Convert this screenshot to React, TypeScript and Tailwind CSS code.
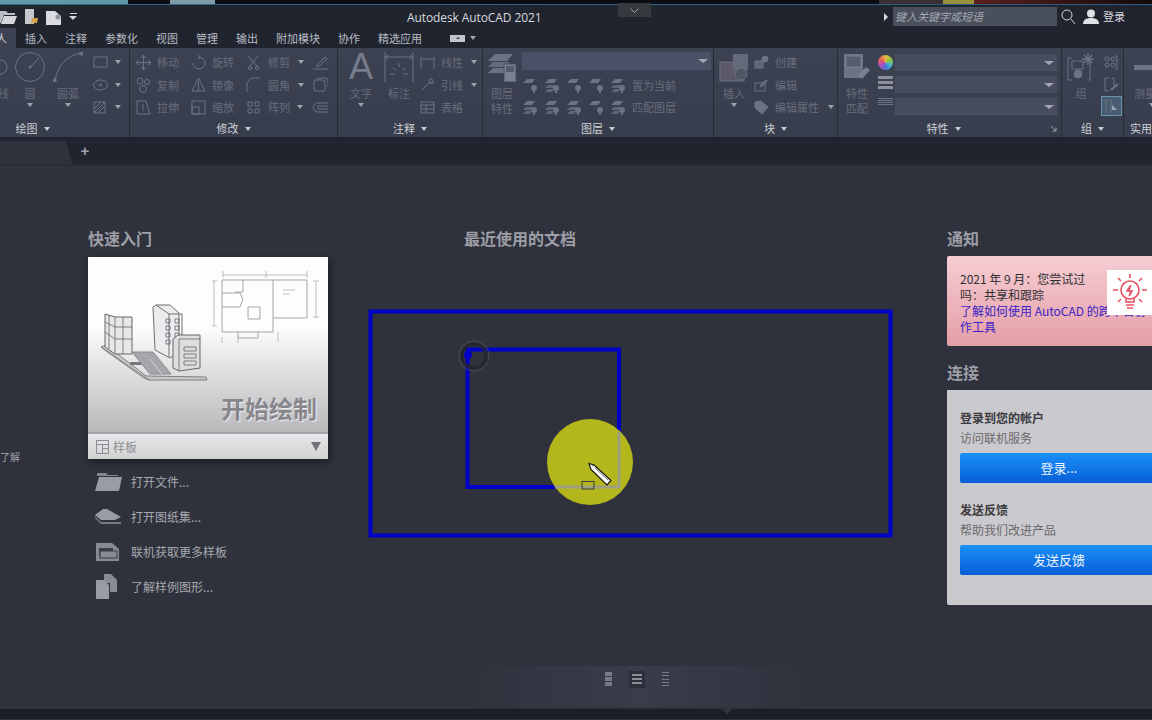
import type { ReactNode } from 'react';

const S = { fill: 'none', stroke: '#6d7383', strokeWidth: 1 };

function Ico({ w = 16, h = 16, children }: { w?: number; h?: number; children: ReactNode }) {
  return (
    <svg width={w} height={h} viewBox={`0 0 ${w} ${h}`} className="shrink-0" {...S}>
      {children}
    </svg>
  );
}

function Down({ light = false }: { light?: boolean }) {
  return <span className={`inline-block w-0 h-0 border-x-[3px] border-x-transparent border-t-[4px] ${light ? 'border-t-[#c9ccd3]' : 'border-t-[#9ea3ae]'}`} />;
}

function Panel({ w, label, labelClass, children, corner }: { w: number; label: string; labelClass?: string; children: ReactNode; corner?: boolean }) {
  return (
    <div className="h-full shrink-0 flex flex-col border-r border-r-[#272b36] overflow-hidden" style={{ width: w }}>
      <div className="h-[72px] pt-[3px] flex items-start">{children}</div>
      <div className={`h-[17px] relative flex items-center justify-center gap-[6px] text-[11px] text-[#cfd1d7] ${labelClass ?? ''}`}>
        <span>{label}</span>
        <Down light />
        {corner && (
          <svg width="7" height="7" viewBox="0 0 7 7" fill="none" stroke="#9ea3ae" className="absolute right-[4px] top-[5px]">
            <path d="M1 1l5 5M6 2.500V6H2.500" />
          </svg>
        )}
      </div>
    </div>
  );
}

function Small({ icon, label, arrow, w, gap = 6 }: { icon: ReactNode; label?: string; arrow?: boolean; w?: number; gap?: number }) {
  return (
    <div className="h-[22.5px] flex items-center text-[11px] text-[#676d7d]" style={{ width: w, gap }}>
      {icon}
      {label && <span className="whitespace-nowrap">{label}</span>}
      {arrow && <span className="ml-auto flex"><Down /></span>}
    </div>
  );
}

function Large({ w, icon, label, arrow, two }: { w: number; icon: ReactNode; label: string; arrow?: boolean; two?: string }) {
  return (
    <div className="shrink-0 flex flex-col items-center text-[11px] text-[#676d7d]" style={{ width: w }}>
      <div className="h-[30px] mt-[1px] flex items-center justify-center">{icon}</div>
      <div className="h-[16px] mt-[3px] leading-[16px] whitespace-nowrap">{label}</div>
      {two && <div className="h-[14px] leading-[14px] whitespace-nowrap">{two}</div>}
      {arrow && <div className="h-[6px] mt-[2px] flex"><Down /></div>}
    </div>
  );
}

function LayerGlyph({ badge = 0 }: { badge?: number }) {
  return (
    <svg width="17" height="17" viewBox="0 0 17 17" className="shrink-0">
      <path d="M5 2h8l-3 4H1z" fill="#6d7383" />
      {badge > 0 && <path d="M4 8h7l-2 3H1z" fill="#5f6575" />}
      {badge > 1 && <path d="M4 12h6l-2 3H1z" fill="#5f6575" />}
      <circle cx="12" cy="11" r="3" fill="#6d7383" />
      <rect x="11" y="14" width="2" height="2" fill="#6d7383" />
    </svg>
  );
}

function Select({ h = 19, bg = 'bg-[#474c5e]' }: { h?: number; bg?: string }) {
  return (
    <div className={`w-full ${bg} flex items-center justify-end pr-[3px] border border-[#3d4252]`} style={{ height: h }}>
      <span className="inline-block w-0 h-0 border-x-[5px] border-x-transparent border-t-[4px] border-t-[#a3a7b2]" />
    </div>
  );
}

function Ribbon() {
  return (
    <div className="h-[89px] flex bg-gradient-to-b from-[#3c4252] to-[#373d4c]">
      <Panel w={130} label="绘图" labelClass="pr-[64px]">
        <div className="w-[9px] shrink-0 overflow-hidden text-[11px] text-[#676d7d] flex flex-col items-end">
          <svg width="9" height="30" className="mt-[1px]" {...S}><circle cx="0" cy="15" r="7" /></svg>
          <div className="h-[16px] mt-[3px] leading-[16px] whitespace-nowrap">线</div>
        </div>
        <Large w={42} label="圆" arrow icon={<Ico w={30} h={30}><circle cx="15" cy="15" r="14.5" /><path d="M15 15 24 6" /><circle cx="15" cy="15" r="1" fill="#6d7383" /></Ico>} />
        <Large w={34} label="圆弧" arrow icon={<Ico w={30} h={30}><path d="M2 29C4 14 14 3 29 1" /><rect x="0" y="27" width="3" height="3" fill="#6d7383" /><rect x="27" y="0" width="3" height="3" fill="#6d7383" /></Ico>} />
        <div className="w-[32px] ml-[8px]">
          <Small w={28} arrow icon={<Ico w={15} h={12}><rect x="1" y="1" width="13" height="10" /></Ico>} />
          <Small w={28} arrow icon={<Ico w={15} h={12}><ellipse cx="7.500" cy="6" rx="7" ry="5" /><circle cx="7.500" cy="6" r="1" /></Ico>} />
          <Small w={28} arrow icon={<Ico w={13} h={13}><rect x="1" y="1" width="11" height="11" /><path d="M1 8 8 1M1 12 12 1M5 12l7-7" /></Ico>} />
        </div>
      </Panel>
      <Panel w={208} label="修改">
        <div className="w-[55px] ml-[6px] shrink-0">
          <Small label="移动" icon={<Ico w={15} h={15}><path d="M7.500 0v15M0 7.500h15M5 3l2.500-3L10 3M5 12l2.500 3 2.500-3M3 5 0 7.500 3 10M12 5l3 2.500L12 10" /></Ico>} />
          <Small label="复制" icon={<Ico w={15} h={16}><circle cx="4" cy="4" r="3" /><circle cx="11" cy="5" r="2.500" /><circle cx="7" cy="12" r="3.500" /></Ico>} />
          <Small label="拉伸" icon={<Ico w={15} h={15}><path d="M1 1h9l4 13H1zM7 4v7" /></Ico>} />
        </div>
        <div className="w-[55px] shrink-0">
          <Small label="旋转" icon={<Ico w={15} h={15}><path d="M8 2a6 6 0 1 1-6 6" /><path d="M8 0v4" /></Ico>} />
          <Small label="镜像" icon={<Ico w={15} h={15}><path d="M7.500 1 1 14h13zM7.500 4v10" /></Ico>} />
          <Small label="缩放" icon={<Ico w={15} h={15}><rect x="1" y="1" width="13" height="13" /><rect x="1" y="7" width="7" height="7" /></Ico>} />
        </div>
        <div className="w-[61px] shrink-0">
          <Small w={58} gap={7} arrow label="修剪" icon={<Ico w={15} h={15}><path d="M2 1l9 10M12 1 4 11" /><circle cx="4" cy="13" r="1.600" /><circle cx="11" cy="13" r="1.600" /></Ico>} />
          <Small w={58} gap={7} arrow label="圆角" icon={<Ico w={15} h={15}><path d="M1 15V8a7 7 0 0 1 7-7h6" /></Ico>} />
          <Small w={56} gap={7} arrow label="阵列" icon={<Ico w={15} h={15}><path d="M2 2h4v4H2zM9 2h4v4H9zM2 9h4v4H2zM9 9h4v4H9z" /></Ico>} />
        </div>
        <div className="w-[16px] ml-[6px] shrink-0">
          <Small icon={<Ico w={15} h={15}><path d="M3 11 12 2l2 2-9 8zM0 14h15" /></Ico>} />
          <Small icon={<Ico w={15} h={15}><rect x="1" y="3" width="11" height="11" rx="2" /><path d="M4 3a3 3 0 0 1 3-2h5a3 3 0 0 1 3 3v6" /></Ico>} />
          <Small icon={<Ico w={15} h={15}><path d="M15 3H5a4 4 0 0 0 0 9h10M15 6H6a1.500 1.500 0 0 0 0 3h9" /></Ico>} />
        </div>
      </Panel>
      <Panel w={145} label="注释">
        <Large w={46} label="文字" arrow icon={<span className="text-[36px] leading-[36px] text-[#767c8b] font-['Liberation_Sans']">A</span>} />
        <Large w={30} label="标注" icon={<Ico w={30} h={30}><path d="M1 0v30M29 0v30M1 5h28M4 3 1 5l3 2M26 3l3 2-3 2M15 11v4M9 16l3 2M21 16l-3 2M6 22h5M19 22h5" /></Ico>} />
        <div className="ml-[6px] w-[58px] shrink-0">
          <Small w={57} arrow label="线性" icon={<Ico w={15} h={15}><path d="M1 2v12M14 2v12M1 4h13" /></Ico>} />
          <Small w={57} arrow label="引线" icon={<Ico w={15} h={15}><path d="M2 13 9 6h5" /><circle cx="11" cy="4" r="2" /></Ico>} />
          <Small label="表格" icon={<Ico w={15} h={13}><rect x="1" y="1" width="13" height="11" /><path d="M1 4h13M1 8h13M6 4v8" /></Ico>} />
        </div>
      </Panel>
      <Panel w={231} label="图层">
        <Large w={38} label="图层" two="特性" icon={
          <svg width="30" height="30" viewBox="0 0 30 30">
            <path d="M8 2h18l-6 7H1z" fill="#6d7383" />
            <path d="M6 10h17l-4 5H1z" fill="#666c7c" />
            <path d="M6 16h14l-3 5H1z" fill="#6d7383" />
            <rect x="17" y="12" width="12" height="18" fill="#7a8090" stroke="#4b5060" />
            <rect x="19" y="14" width="8" height="6" fill="#565c6b" />
          </svg>
        } />
        <div className="w-[191px] shrink-0 flex flex-col">
          <Select h={20} bg="bg-[#4b5066]" />
          <div className="h-[22px] mt-[3px] flex items-center gap-[5px] pl-[1px] text-[11px] text-[#676d7d]">
            <LayerGlyph /><LayerGlyph badge={2} /><LayerGlyph /><LayerGlyph />
            <LayerGlyph badge={2} /><span className="whitespace-nowrap">置为当前</span>
          </div>
          <div className="h-[22px] flex items-center gap-[5px] pl-[1px] text-[11px] text-[#676d7d]">
            <LayerGlyph badge={2} /><LayerGlyph badge={2} /><LayerGlyph badge={2} /><LayerGlyph />
            <LayerGlyph badge={2} /><span className="whitespace-nowrap">匹配图层</span>
          </div>
        </div>
      </Panel>
      <Panel w={124} label="块">
        <Large w={40} label="插入" arrow icon={
          <svg width="30" height="30" viewBox="0 0 30 30">
            <rect x="1" y="10" width="24" height="19" fill="#5c5a66" stroke="#6d7383" />
            <rect x="14" y="2" width="15" height="16" fill="#646a79" />
            <circle cx="22" cy="22" r="6" fill="#505564" stroke="#6d7383" />
          </svg>
        } />
        <div className="w-[80px] shrink-0">
          <Small label="创建" icon={<Ico w={15} h={14}><rect x="1" y="6" width="8" height="7" fill="#5f6575" /><circle cx="11" cy="4" r="3" fill="#6d7383" /></Ico>} />
          <Small label="编辑" icon={<Ico w={15} h={14}><rect x="1" y="5" width="10" height="8" /><path d="M6 9l7-7" strokeWidth="2" /></Ico>} />
          <Small w={80} arrow label="编辑属性" icon={<Ico w={15} h={15}><path d="M1 2 7 1l7 6-6 7L1 8z" fill="#6d7383" /></Ico>} />
        </div>
      </Panel>
      <Panel w={224} label="特性" labelClass="pr-[12px]" corner>
        <Large w={38} label="特性" two="匹配" icon={
          <svg width="28" height="28" viewBox="0 0 28 28">
            <rect x="1" y="1" width="19" height="24" fill="#6d7383" />
            <rect x="3" y="3" width="15" height="11" fill="#565c6b" stroke="#7c8190" />
            <path d="M15 22l8-8 4 3-8 9z" fill="#7a8090" />
          </svg>
        } />
        <div className="w-[18px] shrink-0 flex flex-col items-center gap-[6px]">
          <div className="w-[15px] h-[15px] mt-[4px] rounded-full bg-[conic-gradient(#e6b53c,#8ec63f,#3fb6c9,#4f6fd8,#b44fc4,#e65a5a,#e6b53c)]" />
          <div className="w-[15px] h-[13px] flex flex-col gap-[2px] justify-center">
            <div className="h-[3px] bg-[#8b909c]" /><div className="h-[3px] bg-[#8b909c]" /><div className="h-[3px] bg-[#8b909c]" />
          </div>
          <div className="w-[15px] h-[11px] mt-[3px] flex flex-col gap-[1px]">
            <div className="h-[1px] bg-[#6d7383]" /><div className="h-[1px] bg-[#6d7383]" /><div className="h-[1px] bg-[#6d7383]" /><div className="h-[1px] bg-[#6d7383]" />
          </div>
        </div>
        <div className="w-[164px] shrink-0 flex flex-col gap-[3px] mt-[2px]">
          <Select /><Select /><Select />
        </div>
      </Panel>
      <Panel w={62} label="组">
        <Large w={38} label="组" icon={
          <Ico w={28} h={28}><path d="M5 5H1v22h4M20 5h3v22h-3" /><rect x="5" y="8" width="11" height="8" /><circle cx="11" cy="21" r="4" fill="#6d7383" /><path d="M21 0v12M15 6h12M17 2l8 8M25 2l-8 8" strokeWidth="1.400" /></Ico>
        } />
        <div className="w-[22px] shrink-0 flex flex-col items-center">
          <Small icon={<Ico w={14} h={15}><circle cx="3" cy="4" r="2" /><circle cx="9" cy="4" r="2" /><circle cx="3" cy="10" r="2" /><circle cx="9" cy="10" r="2" /><path d="M11 1h2v13h-2" /></Ico>} />
          <Small icon={<Ico w={15} h={15}><path d="M5 1H1v13h4M8 1h2v8" /><path d="M7 13l7-6" strokeWidth="2" /></Ico>} />
          <div className="w-[21px] h-[20px] bg-[#4a5d70] border border-[#6c93ad] flex items-center justify-center">
            <Ico w={13} h={14}><path d="M3 1H1v12h2M6 1v12" /><path d="M7 6l5 5H7z" fill="#9aa3b0" stroke="none" /></Ico>
          </div>
        </div>
      </Panel>
      <div className="flex-1 overflow-hidden flex flex-col">
        <div className="h-[72px] pt-[3px] text-[11px] text-[#676d7d] flex flex-col pl-[10px]">
          <div className="h-[30px] mt-[1px] flex items-center"><div className="w-[30px] h-[5px] bg-[#6d7383]" /></div>
          <div className="h-[16px] mt-[3px] leading-[16px] whitespace-nowrap">测量</div>
          <div className="h-[6px] mt-[2px] pl-[15px] flex"><Down /></div>
        </div>
        <div className="h-[17px] pl-[6px] leading-[17px] text-[11px] text-[#cfd1d7] whitespace-nowrap">实用工具</div>
      </div>
    </div>
  );
}

function TopStrip() {
  return (
    <div className="h-[4px] flex bg-[#0c0d12]">
      <div className="w-[128px] bg-[#5d9aa5]" />
      <div className="w-[42px]" />
      <div className="w-[45px] bg-[#7f9aa8]" />
      <div className="w-[664px]" />
      <div className="w-[64px] bg-[#3a2f33]" />
      <div className="w-[31px] bg-[#9a8f3a]" />
      <div className="flex-1 bg-gradient-to-r from-[#5a1f1c] to-[#14090a]" />
    </div>
  );
}

function TitleBar() {
  return (
    <div className="h-[23px] relative flex items-center bg-[#20242e]">
      <svg width="18" height="14" viewBox="0 0 18 14" className="shrink-0 ml-0">
        <path d="M0 1h6l2 2h7v2H4L1 13H0z" fill="#b9bcc3" />
        <path d="M4 6h13l-3 8H1z" fill="#d4d6db" />
      </svg>
      <svg width="14" height="17" viewBox="0 0 14 17" className="shrink-0 ml-[7px]">
        <rect x="0" y="1" width="9" height="15" fill="#c6c8ce" />
        <path d="M7 10h6l-1 5H6z" fill="#d6a04a" />
      </svg>
      <svg width="16" height="16" viewBox="0 0 16 16" className="shrink-0 ml-[7px]">
        <path d="M0 2h9l6 5v9H0z" fill="#d9dbe0" />
        <circle cx="12" cy="8" r="2.500" fill="#8f939c" />
      </svg>
      <div className="ml-[7px] flex flex-col items-center gap-[2px]">
        <div className="w-[7px] h-[1.500px] bg-[#d4d6db]" />
        <span className="w-0 h-0 border-x-[4px] border-x-transparent border-t-[4px] border-t-[#d4d6db]" />
      </div>
      <div className="absolute left-[407px] top-[4px] text-[12px] leading-[17px] tracking-[-0.1px] text-[#d7d9de] font-['Open_Sans']">Autodesk AutoCAD 2021</div>
      <div className="absolute left-[618px] top-[-2px] w-[33px] h-[14px] bg-[#36393d] flex items-center justify-center">
        <svg width="9" height="5" viewBox="0 0 9 5" fill="none" stroke="#9da0a6"><path d="M.5.5 4.500 4.500 8.500.5" /></svg>
      </div>
      <span className="ml-[807px] w-0 h-0 border-y-[4px] border-y-transparent border-l-[4px] border-l-[#d8dade]" />
      <div className="ml-[5px] w-[164px] h-[19px] bg-[#4a4f5c] flex items-center pl-[2px] text-[11px] italic text-[#a5a9b3] whitespace-nowrap">键入关键字或短语</div>
      <svg width="15" height="16" viewBox="0 0 15 16" fill="none" stroke="#d5d7dc" className="ml-[4px]"><circle cx="6" cy="6" r="5" /><path d="M10 10l4 5" /></svg>
      <svg width="16" height="15" viewBox="0 0 16 15" className="ml-[7px]"><circle cx="8" cy="4.500" r="4" fill="#dfe1e5" /><path d="M0 15c0-4 3-6 8-6s8 2 8 6z" fill="#dfe1e5" /></svg>
      <span className="ml-[4px] text-[11px] text-[#d7d9de]">登录</span>
    </div>
  );
}

const tabs = ['插入', '注释', '参数化', '视图', '管理', '输出', '附加模块', '协作', '精选应用'];

function TabRow() {
  return (
    <div className="h-[20px] flex items-stretch bg-[#20242e] text-[11px] text-[#b9bcc3]">
      <div className="w-[16px] pr-[9px] bg-[#3c4252] text-[#d7d9de] overflow-hidden flex justify-end leading-[20px]"><span className="whitespace-nowrap">人</span></div>
      <div className="flex items-center gap-[18px] ml-[9px]">
        {tabs.map(t => <span key={t} className="whitespace-nowrap">{t}</span>)}
      </div>
      <div className="ml-[28px] flex items-center gap-[5px]">
        <div className="w-[15px] h-[7px] bg-[#c2c5cc] flex items-center justify-center">
          <span className="w-0 h-0 border-x-[2px] border-x-transparent border-b-[2px] border-b-[#3c4252]" />
        </div>
        <Down />
      </div>
    </div>
  );
}

function FileTabs() {
  return (
    <div className="h-[27px] flex items-stretch bg-[#20242e]">
      <div className="w-[72px] pt-[4px] flex">
        <div className="w-full bg-[#2f323d] [clip-path:polygon(0_0,92%_0,100%_100%,0_100%)]" />
      </div>
      <div className="ml-[6px] mt-[6px] w-[14px] h-[14px] flex items-center justify-center text-[15px] leading-none text-[#9da1ab] font-['Liberation_Sans'] font-bold">+</div>
    </div>
  );
}

function CardArt() {
  return (
    <svg width="240" height="175" viewBox="0 0 240 175" fill="none" stroke="#a9a9ad" className="block">
      {/* floor plan */}
      <g stroke="#a4a4a8">
        <path d="M134 23h85v38h-34v14h-51zM134 50h18l3-8-3-6h-18M155 23v12h-8M185 23v38M160 62V50h12v12M160 62h12M170 75v6h-20v-6" />
        <path d="M124 24h5M126 24v45M124 69h5M225 24h6M228 24v36M225 60h6M135 18h84M135 14v7M178 14v7M219 14v7" strokeWidth=".7" />
        <path d="M134 80v6M150 80v6M190 75v10M195 33h12M195 37h7" strokeWidth=".7" />
      </g>
      {/* buildings */}
      <path d="M13 90l48 33h58l-1-3-60-1-40-31z" fill="#c9c9cc" stroke="#7f7f83" />
      <path d="M13 90l5 4 38 27 5 2" stroke="#7f7f83" />
      <path d="M17 57l10 3h17v37H27l-10-7z" fill="#e8e8ea" stroke="#66666a" />
      <path d="M27 60v37M27 70h17M27 82h17M35 60v37M17 65l10 5M17 75l10 7M21 58v34" stroke="#66666a" strokeWidth=".8" />
      <path d="M44 95h21l18 22H62z" fill="#a6a6aa" stroke="#8a8a8e" />
      <path d="M62 102l12 15M70 100l14 17" stroke="#d4d4d6" />
      <path d="M65 50l3-2h14l9 8v38l-9 7-15-8z" fill="#ececee" stroke="#6f6f73" />
      <path d="M68 48l13 9h13v29M81 57v43" stroke="#6f6f73" />
      <path d="M78 62h4v4h-4zM87 62h4v4h-4zM78 69h4v4h-4zM87 69h4v4h-4zM78 76h4v4h-4zM87 76h4v4h-4zM78 83h4v4h-4z" stroke="#66666a" strokeWidth=".8" />
      <path d="M85 82l5-4h22v33l-21 3-6-3z" fill="#dedee0" stroke="#66666a" />
      <path d="M91 82h21M91 82v32M96 90h12v4H96zM96 97h12v4H96zM96 104h12v4H96z" stroke="#66666a" strokeWidth=".8" />
      <path d="M42 105h10l2 3H42z" fill="#77777b" stroke="none" />
    </svg>
  );
}

function QuickStart() {
  const rows: { label: string; icon: ReactNode }[] = [
    { label: '打开文件...', icon: <svg width="27" height="18" viewBox="0 0 27 18"><path d="M2 0h9l2 2h10v1H2z" fill="#85878e" /><path d="M4 4h23l-3 14H0z" fill="#9a9ca3" /></svg> },
    { label: '打开图纸集...', icon: <svg width="26" height="15" viewBox="0 0 26 15"><path d="M0 6 8 0h4l14 8-6 3H6z" fill="#9a9ca3" /><path d="M0 7l6 6h20v2H6L0 9z" fill="#77797f" /></svg> },
    { label: '联机获取更多样板', icon: <svg width="25" height="20" viewBox="0 0 25 20"><path d="M1 1h16l7 6v12H1z" fill="#898b92" /><rect x="4" y="6" width="14" height="8" fill="#3a3c46" /><rect x="5" y="9" width="17" height="7" fill="#898b92" stroke="#3a3c46" /></svg> },
    { label: '了解样例图形...', icon: <svg width="23" height="25" viewBox="0 0 23 25"><path d="M9 0h7l6 6v12h-7V9H9z" fill="#8a8c93" /><path d="M1 6h8l5 5v14H1z" fill="#9a9ca3" /></svg> },
  ];
  return (
    <div className="w-[240px] shrink-0">
      <h2 className="text-[16px] leading-[20px] font-bold text-[#9d9fa6]">快速入门</h2>
      <div className="mt-[9px] shadow-[2px_3px_8px_rgba(0,0,0,0.45)]">
        <div className="relative h-[175px] bg-gradient-to-b from-[#fdfdfd] from-40% to-[#b9b9bc]">
          <CardArt />
          <div className="absolute right-[11px] bottom-[10px] text-[24px] leading-[28px] font-bold text-[#87878b] [text-shadow:1px_1px_1px_#f2f2f2]">开始绘制</div>
        </div>
        <div className="h-[27px] border-t-2 border-t-[#a4a4a8] bg-gradient-to-b from-[#e8e8ea] to-[#d2d2d4] flex items-center pl-[8px] pr-[7px] text-[12px] text-[#8e8e92]">
          <svg width="13" height="14" viewBox="0 0 13 14" fill="none" stroke="#8e8e92"><rect x=".5" y=".5" width="12" height="13" /><path d="M.5 4.500h12M6.500 4.500v9M6.500 8.500h6" /></svg>
          <span className="ml-[4px]">样板</span>
          <span className="ml-auto w-0 h-0 border-x-[5px] border-x-transparent border-t-[9px] border-t-[#727276]" />
        </div>
      </div>
      <div className="mt-[5px] flex flex-col">
        {rows.map(r => (
          <div key={r.label} className="h-[35px] flex items-center text-[12px] text-[#a6a8ae]">
            <div className="w-[43px] pl-[7px] flex justify-start">{r.icon}</div>
            <span>{r.label}</span>
          </div>
        ))}
      </div>
    </div>
  );
}

function Right() {
  return (
    <div className="w-[205px] shrink-0">
      <h2 className="text-[16px] leading-[20px] font-bold text-[#9d9fa6]">通知</h2>
      <div className="mt-[8px] h-[90px] w-[205px] relative rounded-l-[2px] bg-gradient-to-b from-[#f6cdd4] to-[#e49ea7] pl-[13px] pt-[15px] text-[12px] leading-[16px] text-[#2f2f33] overflow-hidden">
        <p className="w-[140px]">2021 年 9 月：您尝试过吗：共享和跟踪</p>
        <p className="w-[192px] text-[#3a1fc4]">了解如何使用 AutoCAD 的跨平台协作工具</p>
        <div className="absolute left-[160px] top-[14px] w-[45px] h-[45px] bg-white flex items-center justify-center">
          <svg width="40" height="42" viewBox="0 0 40 42" fill="none" stroke="#e8505f" strokeWidth="1.600">
            <circle cx="20" cy="18" r="9" />
            <path d="M16 27v3h8v-3M16 33h8M17 36h6" />
            <path d="M21 13l-4 6h5l-3 5" fill="#e8505f" />
            <path d="M20 2v4M8 6l3 3M32 6l-3 3M3 18h5M32 18h5M8 30l3-3M32 30l-3-3" />
          </svg>
        </div>
      </div>
      <h2 className="mt-[16px] text-[16px] leading-[20px] font-bold text-[#9d9fa6]">连接</h2>
      <div className="mt-[8px] h-[215px] rounded-bl-[2px] bg-[#cac9cd] pl-[13px] pt-[20px] text-[12px] leading-[16px] overflow-hidden">
        <div className="font-bold text-[#3b3b3f]">登录到您的帐户</div>
        <div className="mt-[4px] text-[#6a6a6e]">访问联机服务</div>
        <div className="mt-[7px] w-[198px] h-[30px] rounded-[2px] bg-gradient-to-b from-[#1b90f8] to-[#0a5ed6] flex items-center justify-center text-[#f2f6fc] text-[13px]">登录...</div>
        <div className="mt-[19px] font-bold text-[#3b3b3f]">发送反馈</div>
        <div className="mt-[4px] text-[#6a6a6e]">帮助我们改进产品</div>
        <div className="mt-[7px] w-[198px] h-[30px] rounded-[2px] bg-gradient-to-b from-[#1b90f8] to-[#0a5ed6] flex items-center justify-center text-[#f2f6fc] text-[13px]">发送反馈</div>
      </div>
    </div>
  );
}

function Main() {
  return (
    <div className="h-[545px] relative bg-[#2f323d] overflow-hidden border-t-2 border-t-[#2a2d37]">
      <div className="pt-[62px] pl-[88px] flex items-start">
        <QuickStart />
        <div className="w-[136px] shrink-0" />
        <div className="w-[483px] shrink-0">
          <h2 className="text-[16px] leading-[20px] font-bold text-[#9d9fa6]">最近使用的文档</h2>
        </div>
        <Right />
      </div>
      <div className="absolute left-0 top-[284px] text-[10px] leading-[14px] text-[#a3a5ab]">了解</div>
      <div className="absolute left-[465px] right-[340px] bottom-[2px] h-[41px] pr-[3px] pb-[15px] bg-gradient-to-r from-[#2f323d] via-[#393d49] to-[#2f323d] flex items-center justify-center gap-[17px]">
        <div className="w-[7px] h-[14px] flex flex-col gap-[1px]"><div className="h-[4px] bg-[#777b86]" /><div className="h-[4px] bg-[#777b86]" /><div className="h-[4px] bg-[#777b86]" /></div>
        <div className="w-[16px] h-[17px] bg-[#2c2f39] flex flex-col justify-center gap-[2px] px-[3px]"><div className="h-[2px] bg-[#8a8e98]" /><div className="h-[2px] bg-[#8a8e98]" /><div className="h-[2px] bg-[#8a8e98]" /></div>
        <div className="w-[7px] h-[14px] flex flex-col justify-between"><div className="h-[1px] bg-[#777b86]" /><div className="h-[1px] bg-[#777b86]" /><div className="h-[1px] bg-[#777b86]" /><div className="h-[1px] bg-[#777b86]" /><div className="h-[1px] bg-[#777b86]" /></div>
      </div>
    </div>
  );
}

function Sketch() {
  return (
    <svg width="1152" height="720" viewBox="0 0 1152 720" fill="none" className="absolute left-0 top-0 pointer-events-none">
      <rect x="370.500" y="311.500" width="520" height="224" stroke="#0000c8" strokeWidth="4" />
      <path d="M619 450V349.500H467.500V487h88" stroke="#0000c8" strokeWidth="4" />
      <circle cx="468" cy="355" r="4" fill="#0000c8" />
      <circle cx="474" cy="356" r="12" stroke="#23252e" strokeWidth="3" opacity=".9" />
      <circle cx="474" cy="356" r="15" stroke="#4a4d58" strokeWidth="1" />
      <circle cx="590" cy="462" r="43" fill="#b3b71c" />
      <path d="M619 432v55h-64" stroke="#9d9f80" strokeWidth="3" />
      <rect x="582" y="481.500" width="12" height="7.500" stroke="#3a3c46" strokeWidth="1" />
      <path d="M589 463.500l5 1.500 17 15.500-4 4.500-16-15.500z" fill="#fff" stroke="#111" strokeWidth="1.200" />
      <path d="M595 468l13 12M592 466l3-1" stroke="#555" strokeWidth=".8" />
    </svg>
  );
}

export default function App() {
  return (
    <div className="relative w-[1152px] h-[720px] overflow-hidden bg-[#2f323d] font-['Noto_Sans_CJK_SC','Noto_Sans',sans-serif]">
      <TopStrip />
      <div className="h-[1px] bg-gradient-to-r from-[#2f6f80] to-[#2b5c88]" />
      <TitleBar />
      <TabRow />
      <Ribbon />
      <FileTabs />
      <Main />
      <div className="h-[10px] relative bg-[#1a1e27]">
        <span className="absolute left-[722px] top-0 w-0 h-0 border-x-[5px] border-x-transparent border-t-[6px] border-t-[#2f323d]" />
      </div>
      <Sketch />
    </div>
  );
}
